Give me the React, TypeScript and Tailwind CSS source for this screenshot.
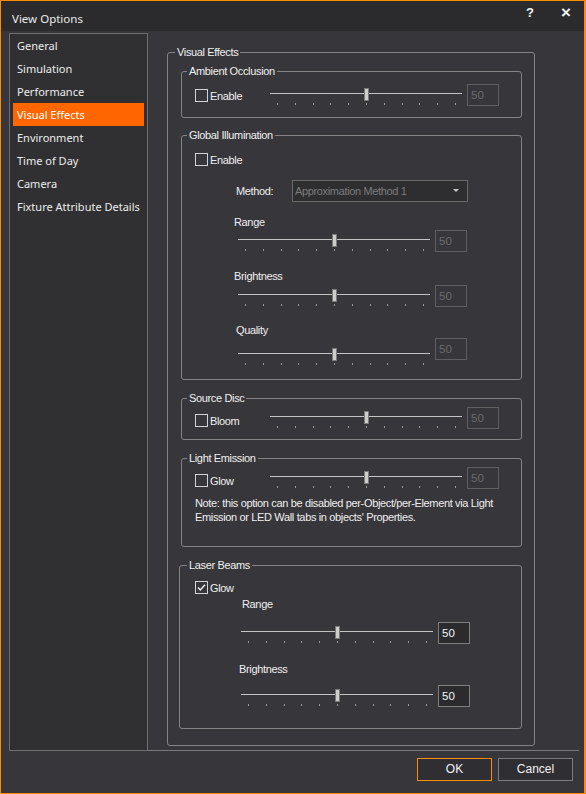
import React from "react";

function Slider({ w = 192, trackY = 9, h = 22 }: { w?: number; trackY?: number; h?: number }) {
  const ticks = Array.from({ length: 11 }, (_, i) => Math.round(7 + (i * (w - 14)) / 10));
  const cx = Math.floor(w / 2) - 2;
  return (
    <svg width={w} height={h} className="block shrink-0">
      <rect x={0} y={trackY} width={w} height={1} fill="#c4c4c4" />
      {ticks.map((t) => (
        <rect key={t} x={t} y={trackY + 10} width={1} height={2} fill="#9a9a9a" />
      ))}
      <rect x={cx} y={trackY - 5} width={5} height={13} fill="#7a7a7a" />
      <rect x={cx + 1} y={trackY - 4} width={3} height={11} fill="#cdcdcd" />
    </svg>
  );
}

function NumBox({ enabled = false }: { enabled?: boolean }) {
  return (
    <div
      className={
        enabled
          ? "w-[32px] h-[22px] shrink-0 border border-[#7f7f7f] bg-[#2b2b2e] text-[#f4f4f4] text-[11.5px] leading-[20px] pl-[3px] tracking-normal"
          : "w-[32px] h-[22px] shrink-0 border border-[#5f5f60] text-[#6b6b6b] text-[11.5px] leading-[20px] pl-[3px] tracking-normal"
      }
    >
      50
    </div>
  );
}

function Check({ checked = false }: { checked?: boolean }) {
  return (
    <span className="w-[13px] h-[13px] shrink-0 border border-[#d4d4d4] flex items-center justify-center">
      {checked && (
        <svg width="11" height="11" viewBox="0 0 11 11" className="block">
          <path d="M2 5.5 L4.3 8 L9 2.8" fill="none" stroke="#f2f2f2" strokeWidth="1.4" />
        </svg>
      )}
    </span>
  );
}

function CheckRow({ label, checked = false }: { label: string; checked?: boolean }) {
  return (
    <div className="flex items-center gap-[2px] h-[13px]">
      <Check checked={checked} />
      <span className="leading-[14px]">{label}</span>
    </div>
  );
}

function SliderRow({ label, checkTop }: { label: string; checkTop: string }) {
  return (
    <div className="flex items-start h-[22px]">
      <div className={`w-[75px] ${checkTop}`}>
        <CheckRow label={label} />
      </div>
      <Slider />
      <div className="ml-[5px]">
        <NumBox />
      </div>
    </div>
  );
}

function Legend({ children, ml = "ml-[5px]" }: { children: React.ReactNode; ml?: string }) {
  return <legend className={`${ml} px-[2px] h-[14px] leading-[14px] text-[#f0f0f0]`}>{children}</legend>;
}

const groupCls = "border border-[#848484] rounded-[3px] min-w-0";

export default function App() {
  const menu = [
    "General",
    "Simulation",
    "Performance",
    "Visual Effects",
    "Environment",
    "Time of Day",
    "Camera",
    "Fixture Attribute Details",
  ];
  return (
    <div className="w-[586px] h-[794px] border-t border-l border-b border-r-2 border-[#ff8c00] bg-[#37363b] flex flex-col text-[#efefef] font-['Liberation_Sans',Arial,sans-serif] text-[11px] tracking-[-0.35px] overflow-hidden">
      {/* Title bar */}
      <div className="h-[30px] shrink-0 bg-[#2b2b2d] flex items-start font-['Noto_Sans',sans-serif] tracking-normal">
        <div className="pl-[11px] pt-[10px] text-[11.5px] leading-[16px] text-[#eaeaea]">View Options</div>
        <div className="ml-auto flex items-start pt-[3px]">
          <span className="w-[20px] text-center text-[13px] font-bold leading-[18px] text-[#f2f2f2] font-['Liberation_Sans',sans-serif]">?</span>
          <span className="ml-[16px] mr-[8px] w-[20px] text-center text-[17px] font-bold leading-[18px] text-[#f2f2f2] font-['Liberation_Sans',sans-serif]">×</span>
        </div>
      </div>

      {/* Body */}
      <div className="flex pt-[2px] pl-[8px] pr-[5px]">
        {/* Left list */}
        <div className="w-[139px] h-[718px] shrink-0 border border-[#6e6e6e] bg-[#303032] px-[2px] font-['Noto_Sans',sans-serif] tracking-normal">
          {menu.map((m) => (
            <div
              key={m}
              className={
                m === "Visual Effects"
                  ? "h-[23px] mx-[1px] pl-[4px] pt-[2px] flex items-center bg-[#ff6600] text-white text-[11px] whitespace-nowrap"
                  : "h-[23px] mx-[1px] pl-[4px] pt-[2px] flex items-center text-[#ececec] text-[11px] whitespace-nowrap"
              }
            >
              {m}
            </div>
          ))}
        </div>

        {/* Right content */}
        <div className="flex-1 h-[718px] border-b border-[#7a7a7a] pl-[19px] pt-[12px]">
          <fieldset className={`${groupCls} w-[368px]`}>
            <Legend ml="ml-[7px]">Visual Effects</Legend>
            <div className="pl-[13px] pr-[12px] pt-[5px] pb-[16px] flex flex-col">
              {/* Ambient Occlusion */}
              <fieldset className={groupCls}>
                <Legend>Ambient Occlusion</Legend>
                <div className="pl-[13px] pt-[6px] pb-[11px]">
                  <SliderRow label="Enable" checkTop="mt-[5px]" />
                </div>
              </fieldset>

              {/* Global Illumination */}
              <fieldset className={`${groupCls} mt-[10px]`}>
                <Legend>Global Illumination</Legend>
                <div className="pl-[13px] pt-[11px] pb-[14px] flex flex-col">
                  <CheckRow label="Enable" />
                  <div className="mt-[14px] ml-[41px] flex items-center h-[22px]">
                    <span className="w-[56px] leading-[14px]">Method:</span>
                    <div className="w-[176px] h-[22px] border border-[#6a6a6a] bg-[#2e2e31] flex items-center pl-[2px] pr-[8px]">
                      <span className="text-[#7c7c7c] leading-[14px] whitespace-nowrap">Approximation Method 1</span>
                      <svg width="6" height="4" viewBox="0 0 6 4" className="ml-auto block">
                        <path d="M0 0 H6 L3 3 Z" fill="#c8c8c8" />
                      </svg>
                    </div>
                  </div>
                  <div className="mt-[13px] ml-[39px] leading-[14px]">Range</div>
                  <div className="mt-[1px] ml-[43px] flex items-start">
                    <Slider />
                    <div className="ml-[5px]">
                      <NumBox />
                    </div>
                  </div>
                  <div className="mt-[17px] ml-[39px] leading-[14px]">Brightness</div>
                  <div className="mt-[2px] ml-[43px] flex items-start">
                    <Slider />
                    <div className="ml-[5px]">
                      <NumBox />
                    </div>
                  </div>
                  <div className="mt-[16px] ml-[41px] leading-[14px]">Quality</div>
                  <div className="mt-[1px] ml-[43px] flex items-start">
                    <Slider trackY={15} h={27} />
                    <div className="ml-[5px]">
                      <NumBox />
                    </div>
                  </div>
                </div>
              </fieldset>

              {/* Source Disc */}
              <fieldset className={`${groupCls} mt-[11px]`}>
                <Legend>Source Disc</Legend>
                <div className="pl-[13px] pt-[2px] pb-[10px]">
                  <SliderRow label="Bloom" checkTop="mt-[7px]" />
                </div>
              </fieldset>

              {/* Light Emission */}
              <fieldset className={`${groupCls} mt-[11px]`}>
                <Legend>Light Emission</Legend>
                <div className="pl-[13px] pt-[2px] pb-[22px]">
                  <SliderRow label="Glow" checkTop="mt-[7px]" />
                  <p className="mt-[7px] leading-[14px] whitespace-nowrap">
                    Note: this option can be disabled per-Object/per-Element via Light
                    <br />
                    Emission or LED Wall tabs in objects&apos; Properties.
                  </p>
                </div>
              </fieldset>

              {/* Laser Beams */}
              <fieldset className={`${groupCls} mt-[11px] -ml-[2px]`}>
                <Legend ml="ml-[7px]">Laser Beams</Legend>
                <div className="pl-[15px] pt-[9px] pb-[21px] flex flex-col">
                  <CheckRow label="Glow" checked />
                  <div className="mt-[3px] ml-[47px] leading-[14px]">Range</div>
                  <div className="mt-[11px] ml-[46px] flex items-start">
                    <Slider />
                    <div className="ml-[5px]">
                      <NumBox enabled />
                    </div>
                  </div>
                  <div className="mt-[18px] ml-[44px] leading-[14px]">Brightness</div>
                  <div className="mt-[9px] ml-[46px] flex items-start">
                    <Slider />
                    <div className="ml-[5px]">
                      <NumBox enabled />
                    </div>
                  </div>
                </div>
              </fieldset>
            </div>
          </fieldset>
        </div>
      </div>

      {/* Footer */}
      <div className="flex-1 flex justify-end items-start pt-[7px] pr-[11px] gap-[6px]">
        <button className="w-[75px] h-[23px] border border-[#ff8c00] bg-[#2f2e32] text-[#f2f2f2] text-[12px] leading-[21px] tracking-normal">
          OK
        </button>
        <button className="w-[75px] h-[23px] border border-[#7c7c7c] bg-[#2f2e32] text-[#f2f2f2] text-[12px] leading-[21px] tracking-normal">
          Cancel
        </button>
      </div>
    </div>
  );
}
